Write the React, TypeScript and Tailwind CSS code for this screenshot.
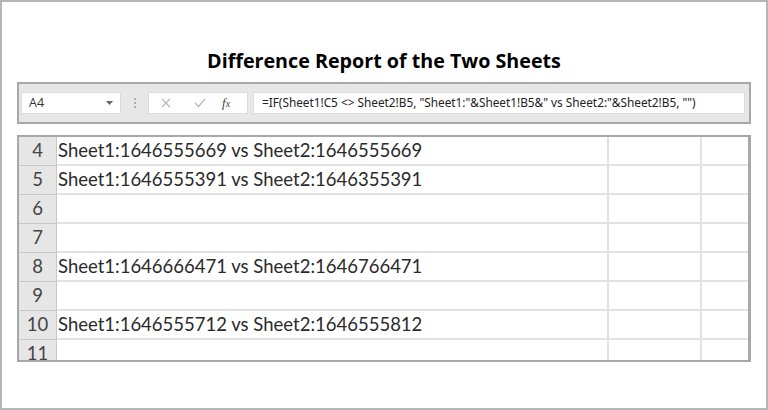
import React from "react";

const rows: { n: number; text: string }[] = [
  { n: 4, text: "Sheet1:1646555669 vs Sheet2:1646555669" },
  { n: 5, text: "Sheet1:1646555391 vs Sheet2:1646355391" },
  { n: 6, text: "" },
  { n: 7, text: "" },
  { n: 8, text: "Sheet1:1646666471 vs Sheet2:1646766471" },
  { n: 9, text: "" },
  { n: 10, text: "Sheet1:1646555712 vs Sheet2:1646555812" },
  { n: 11, text: "" },
];

export default function App() {
  return (
    <div className="w-[768px] h-[410px] bg-white border-2 border-[#b5b5b5] flex flex-col overflow-hidden">
      <div
        className="h-[80px] flex items-end justify-center pb-[7px] text-[19.7px] font-bold text-black leading-[28px]"
        style={{ fontFamily: '"Open Sans", sans-serif' }}
      >
        Difference Report of the Two Sheets
      </div>
      <div className="mx-[15px] h-[42px] border-2 border-[#a8a8a8] bg-[#e7e7e7] flex items-center pl-[2px] pr-[4px]">
        <div className="w-[100px] h-[22px] bg-white border border-[#dcdcdc] flex items-center justify-between pl-[7px] pr-[7px]">
          <span className="text-[12.5px] text-[#333]" style={{ fontFamily: '"Open Sans", sans-serif' }}>A4</span>
          <svg width="7" height="4" viewBox="0 0 7 4"><path d="M0 0 L7 0 L3.5 4 Z" fill="#666" /></svg>
        </div>
        <div className="w-[27px] flex flex-col items-center justify-center gap-[2px]">
          <div className="w-[2px] h-[2px] bg-[#b0b0b0]" />
          <div className="w-[2px] h-[2px] bg-[#b0b0b0]" />
          <div className="w-[2px] h-[2px] bg-[#b0b0b0]" />
        </div>
        <div className="w-[100px] h-[22px] bg-white border border-[#dcdcdc] flex items-center">
          <svg className="ml-[12px]" width="10" height="10" viewBox="0 0 10 10">
            <path d="M1 1 L9 9 M9 1 L1 9" stroke="#b8b8b8" strokeWidth="1.2" />
          </svg>
          <svg className="ml-[23px]" width="12" height="10" viewBox="0 0 12 10">
            <path d="M1 5 L4.5 8.5 L11 1" stroke="#b8b8b8" strokeWidth="1.2" fill="none" />
          </svg>
          <span
            className="ml-[16px] text-[13px] italic text-[#444]"
            style={{ fontFamily: '"Liberation Serif", serif' }}
          >
            f<span className="text-[10px]">x</span>
          </span>
        </div>
        <div className="ml-[5px] flex-1 h-[22px] bg-white border border-[#dcdcdc] flex items-center pl-[8px]">
          <span className="text-[11.8px] text-[#222] whitespace-nowrap" style={{ fontFamily: '"Noto Sans", sans-serif' }}>
            =IF(Sheet1!C5 &lt;&gt; Sheet2!B5, "Sheet1:"&amp;Sheet1!B5&amp;" vs Sheet2:"&amp;Sheet2!B5, "")
          </span>
        </div>
      </div>
      <div className="mx-[15px] mt-[11px] h-[227px] border-t-2 border-l-2 border-b-2 border-r-[3px] border-[#a8a8a8] overflow-hidden">
        <div className="grid grid-cols-[38px_552px_93px_1fr]">
          {rows.map((r) => (
            <React.Fragment key={r.n}>
              <div
                className="h-[29px] bg-[#e6e6e6] border-b border-r border-[#c8c8c8] flex items-center justify-center text-[18.5px] text-[#444]"
                style={{ fontFamily: '"Lato", sans-serif' }}
              >
                {r.n}
              </div>
              <div
                className="h-[29px] border-b-2 border-r-2 border-[#e2e2e2] flex items-center pl-[1px] text-[18.5px] text-[#2a2a2a] whitespace-nowrap"
                style={{ fontFamily: '"Lato", sans-serif' }}
              >
                {r.text}
              </div>
              <div className="h-[29px] border-b-2 border-r-2 border-[#e2e2e2]" />
              <div className="h-[29px] border-b-2 border-[#e2e2e2]" />
            </React.Fragment>
          ))}
        </div>
      </div>
    </div>
  );
}
